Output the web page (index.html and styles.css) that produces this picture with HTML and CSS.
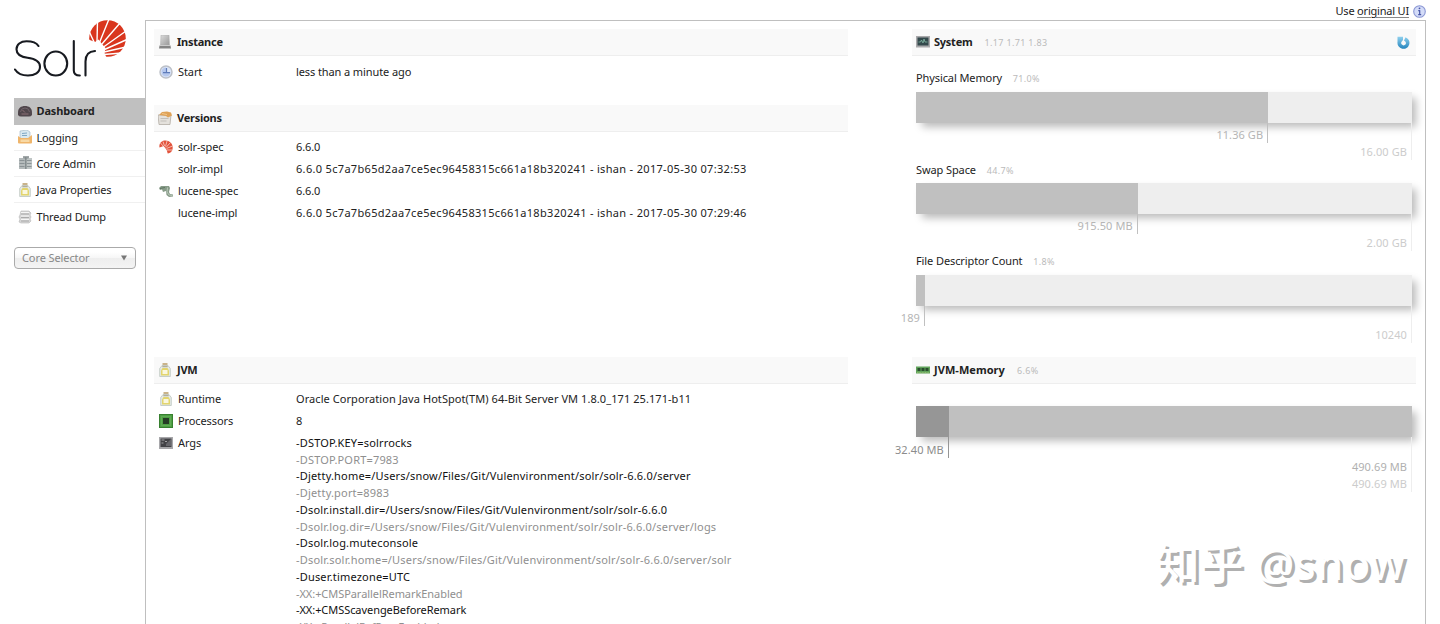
FILE: index.html
```html
<!DOCTYPE html>
<html lang="en">
  <head>
    <meta charset="UTF-8" />
    <title>Solr Admin</title>
    <link rel="stylesheet" href="styles.css">
  </head>
  <body>
    <!-- shared icons -->
    <svg class="defs">
      <linearGradient id="g-metal" x1="0" y1="0" x2="1" y2="1">
        <stop offset="0" stop-color="#ddd" /><stop offset="1" stop-color="#999" />
      </linearGradient>
      <linearGradient id="g-blue" x1="0" y1="0" x2="0" y2="1">
        <stop offset="0" stop-color="#8fd0ee" /><stop offset="1" stop-color="#2384bd" />
      </linearGradient>
      <symbol id="i-jar" viewBox="0 0 14 14">
        <rect x="4.500" y="0" width="5" height="2.500" fill="#c9b38a" />
        <path d="M4 2.500h6l2.300 3V13.500H1.700V5.500z" fill="#e5ebe6" stroke="#b5beb9" stroke-width=".7" />
        <path d="M4.500 5h5l1.500 2.500v5H3v-5z" fill="#e3d56d" />
        <rect x="4.500" y="7" width="5" height="4" fill="#faf7df" />
        <path d="M4.300 3.700h5.400" stroke="#a9a184" />
      </symbol>
      <symbol id="i-solr" viewBox="0 0 14 14">
        <path d="M.5 7.500C-.3 3 3 .5 6.500.5c4 0 7.200 3 7.200 7 0 3-1.500 5.500-5 6l-1-3.500-3-4z" fill="#e2523b" />
        <path d="M4.500 6.500L1.500 3M5.500 6L4 1.500M6.500 6.500L8 1M7 7.500L11.500 2.500M7.500 8.500L13.500 6M8 10l5.500 0" stroke="#fbd5cd" stroke-width=".8" />
      </symbol>
    </svg>

    <div class="wrapper">
      <div class="sidebar">
        <svg class="logo" viewBox="0 0 114 60">
          <circle cx="93.500" cy="18.500" r="18.300" fill="#d9361e" />
          <path d="M72 18.500L81 22L84.500 19.500L88 24L91.500 28L90.500 33L93 39L78 39L70 28z" fill="#fff" />
          <g class="logo-rays">
            <path d="M80.500 23L74 9M83 22L83.500 1M85.500 22.500L95 -1M87.500 24.500L106 3M89.500 27L112 11M90.500 29.500L113 19.500M90 32L112 27M90 34.500L108 33" />
          </g>
          <g class="logo-word">
            <path d="M24.500 26C22 22 17 21.300 12.500 21.300C6.500 21.300 2.500 24.500 2.500 29.200C2.500 35.500 8 37 13.500 37.800C20 38.700 26 40.500 26 46.800C26 52.500 20.500 55.500 14 55.500C7.500 55.500 3.500 53.500 1 49.500" />
            <ellipse cx="41.800" cy="43.500" rx="11.400" ry="12" />
            <path d="M59.800 21v29.500q0 5 6 5" />
            <path d="M71.500 55.500V41.500q0-10 9.500-10.500" />
          </g>
        </svg>

        <ul class="menu">
          <li class="active">
            <svg viewBox="0 0 14 14"><path d="M0 8.500C0 4 3 2 7 2s7 2 7 6.500v2.500q-1 1.500-3 1.500H3q-2 0-3-1.500z" fill="#51474c" /><path d="M2.500 8q.5-4 4.500-4t4.500 4" stroke="#71646a" fill="none" /><path d="M7 8.500L4.500 6M3.500 10h7" stroke="#8d7076" /></svg>
            <span>Dashboard</span>
          </li>
          <li>
            <svg viewBox="0 0 14 14"><path d="M2 1l7-1 3 2v7H2z" fill="#d9e9f1" stroke="#9ab4c2" stroke-width=".6" /><path d="M4 3.500l5-.5M4 5.500h5" stroke="#80a8c4" /><path d="M0 6l3 2h7l4-3v7.500q0 1-1 1H1q-1 0-1-1z" fill="#efb56b" /><path d="M2.500 9.500h9v2.500h-9z" fill="#f8d9a5" /></svg>
            <span>Logging</span>
          </li>
          <li>
            <svg viewBox="0 0 14 14"><path d="M5 0h6v13H5z" fill="#a2a8a9" /><path d="M1 2h6v11H1z" fill="#b4babb" /><path d="M9 2h5v11H9z" fill="#bfc5c5" /><path d="M5.500 2h5M1.500 4.500h5M1.500 7.500h5M1.500 10.500h5M9 4.500h4.500M9 7.500h4.500M9 10.500h4.500" stroke="#7f888b" stroke-width=".8" /><path d="M7.700 1v12" stroke="#7f888b" /></svg>
            <span>Core Admin</span>
          </li>
          <li>
            <svg><use href="#i-jar" /></svg>
            <span>Java Properties</span>
          </li>
          <li>
            <svg viewBox="0 0 14 14"><path d="M3 1h8l2 2-1 2 1 2-1 2 1 2-2 2H3l-2-1 1-3-1-2 1-2z" fill="#d6d6d6" stroke="#b5b5b5" stroke-width=".6" /><path d="M3 4h8M3 7.500h8M3 11h8" stroke="#a5a5a5" stroke-width=".9" /><path d="M3 2.500h8M3 6h8M3 9.500h8" stroke="#f5f5f5" /></svg>
            <span>Thread Dump</span>
          </li>
        </ul>

        <div class="core-selector">
          <span>Core Selector</span>
          <svg viewBox="0 0 6 6"><path d="M0 .5h6L3 5.500z" fill="#777" /></svg>
        </div>
      </div>

      <div class="main">
        <div class="top-link">
          <span>Use <a>original UI</a></span>
          <svg viewBox="0 0 13 13"><circle cx="6.500" cy="6.500" r="5.800" fill="#d4dcf8" stroke="#8b97d4" stroke-width="1.100" /><path d="M6.700 5.300v4.500M5.300 5.600h1.500M5.200 9.700h3" stroke="#4654a5" stroke-width="1.200" /><circle cx="6.500" cy="3.300" r=".9" fill="#4654a5" /></svg>
        </div>

        <div class="content">
          <!-- Instance + versions -->
          <div class="col">
            <div class="block instance">
              <h2>
                <svg viewBox="0 0 14 14"><path d="M3 0h8l.5 10H2.500z" fill="url(#g-metal)" stroke="#aaa" stroke-width=".5" /><path d="M1.500 10.500h11L13 13.500H1z" fill="#858585" /><path d="M2 10.500h10" stroke="#ccc" /></svg>
                <span>Instance</span>
              </h2>
              <dl>
                <dt>
                  <svg viewBox="0 0 14 14"><circle cx="7" cy="7" r="6" fill="#dce6f8" stroke="#bcc0c8" stroke-width="1.500" /><path d="M7 2.500a4.500 4.500 0 1 0 4.500 4.500H7z" fill="#b6c8ed" /><path d="M7.500 3v5M4 7.700h7" stroke="#5f7cba" stroke-width="1.200" /></svg>
                  <span>Start</span>
                </dt>
                <dd>less than a minute ago</dd>
              </dl>
            </div>

            <div class="block versions">
              <h2>
                <svg viewBox="0 0 14 14"><path d="M0 4h13l-1 9.500H1z" fill="#e4e1dc" stroke="#aaa49b" stroke-width=".7" /><path d="M2.500 7.500h8M2.500 10h6" stroke="#c2bfba" /><path d="M1 4l3-3 5-.500 4 1 1 3-4 2-2-1.500z" fill="#dfa257" /><path d="M4 2.500l5 1" stroke="#f3c688" /></svg>
                <span>Versions</span>
              </h2>
              <dl>
                <dt><svg><use href="#i-solr" /></svg><span>solr-spec</span></dt>
                <dd>6.6.0</dd>
                <dt><i></i><span>solr-impl</span></dt>
                <dd class="hash">6.6.0 5c7a7b65d2aa7ce5ec96458315c661a18b320241 - ishan - 2017-05-30 07:32:53</dd>
                <dt>
                  <svg viewBox="0 0 14 14"><path d="M0 4l2-2h8l1 2-1 4 1 2 3 .5v2L10 13l-2.500-2-.5-4-3 1-1-2.500-2 .5z" fill="#879b88" /><path d="M8.500 3.500L8 8l2 3 3.500.5" stroke="#b9c7b8" fill="none" /><path d="M1 4.500l5-1" stroke="#5e7562" /></svg>
                  <span>lucene-spec</span>
                </dt>
                <dd>6.6.0</dd>
                <dt><i></i><span>lucene-impl</span></dt>
                <dd class="hash">6.6.0 5c7a7b65d2aa7ce5ec96458315c661a18b320241 - ishan - 2017-05-30 07:29:46</dd>
              </dl>
            </div>
          </div>

          <!-- System -->
          <div class="col right">
            <h2>
              <svg viewBox="0 0 14 14"><rect y="1" width="14" height="11.500" fill="#a9a9ab" /><rect x="1.500" y="2.500" width="11" height="8" fill="#34494c" /><path d="M2.500 7h2l1-2 1.500 3 1-4 1 3h2.500" stroke="#83b9a4" stroke-width=".8" fill="none" /></svg>
              <span>System</span>
              <small>1.17 1.71 1.83</small>
              <svg class="reload" viewBox="0 0 13 13"><path d="M.5.8l5.500 0v3.200L4.800 5.500a2.300 2.300 0 1 0 3.700.3L7 4.500 8.500 1.200A6 6 0 1 1 .5 6z" fill="url(#g-blue)" /></svg>
            </h2>
            <div class="graph">
              <h3>Physical Memory <small>71.0%</small></h3>
              <div class="bar"><div class="fill" style="width: 71%"></div></div>
              <div class="values">
                <div class="value used" style="width: 71%"><span>11.36 GB</span></div>
                <div class="value max"><span>16.00 GB</span></div>
              </div>
            </div>
            <div class="graph">
              <h3>Swap Space <small>44.7%</small></h3>
              <div class="bar"><div class="fill" style="width: 44.7%"></div></div>
              <div class="values">
                <div class="value used" style="width: 44.7%"><span>915.50 MB</span></div>
                <div class="value max"><span>2.00 GB</span></div>
              </div>
            </div>
            <div class="graph">
              <h3>File Descriptor Count <small>1.8%</small></h3>
              <div class="bar"><div class="fill" style="width: 1.8%"></div></div>
              <div class="values">
                <div class="value used" style="width: 1.8%"><span>189</span></div>
                <div class="value max"><span>10240</span></div>
              </div>
            </div>
          </div>

          <!-- JVM -->
          <div class="col">
            <h2><svg><use href="#i-jar" /></svg><span>JVM</span></h2>
            <dl>
              <dt><svg><use href="#i-jar" /></svg><span>Runtime</span></dt>
              <dd class="runtime">Oracle Corporation Java HotSpot(TM) 64-Bit Server VM 1.8.0_171 25.171-b11</dd>
              <dt>
                <svg viewBox="0 0 14 14"><rect x=".5" y=".5" width="13" height="13" fill="#4d9f43" stroke="#37802f" /><rect x="4" y="4" width="6" height="6" fill="#263c25" /><path d="M2.500 2.500h9v9h-9z" fill="none" stroke="#80bb70" stroke-width=".8" stroke-dasharray="1 1" /></svg>
                <span>Processors</span>
              </dt>
              <dd>8</dd>
              <dt>
                <svg viewBox="0 0 14 14"><rect y="1" width="14" height="12" fill="#a7a7aa" /><rect x="1.500" y="2.500" width="11" height="8.500" fill="#424246" /><path d="M2.500 4h3M6 5.500h2M2.500 7h2" stroke="#bbb" stroke-width=".8" /><path d="M7 8l5-5v7H7z" fill="#66666b" /></svg>
                <span>Args</span>
              </dt>
              <dd>
                <ul class="args">
                  <li>-DSTOP.KEY=solrrocks</li>
                  <li>-DSTOP.PORT=7983</li>
                  <li>-Djetty.home=/Users/snow/Files/Git/Vulenvironment/solr/solr-6.6.0/server</li>
                  <li>-Djetty.port=8983</li>
                  <li>-Dsolr.install.dir=/Users/snow/Files/Git/Vulenvironment/solr/solr-6.6.0</li>
                  <li>-Dsolr.log.dir=/Users/snow/Files/Git/Vulenvironment/solr/solr-6.6.0/server/logs</li>
                  <li>-Dsolr.log.muteconsole</li>
                  <li>-Dsolr.solr.home=/Users/snow/Files/Git/Vulenvironment/solr/solr-6.6.0/server/solr</li>
                  <li>-Duser.timezone=UTC</li>
                  <li class="flags">-XX:+CMSParallelRemarkEnabled</li>
                  <li class="flags">-XX:+CMSScavengeBeforeRemark</li>
                  <li class="flags">-XX:+ParallelRefProcEnabled</li>
                </ul>
              </dd>
            </dl>
          </div>

          <!-- JVM-Memory -->
          <div class="col right">
            <h2>
              <svg viewBox="0 0 14 14"><rect y="3.500" width="14" height="7" fill="#60a35a" /><path d="M1.500 5h3v3h-3zM5.500 5h3v3h-3zM9.500 5h3v3h-3z" fill="#294d2d" /><path d="M1 9.700h12" stroke="#a8c77b" stroke-width=".8" stroke-dasharray="1 .6" /></svg>
              <span class="wide">JVM-Memory</span>
              <small>6.6%</small>
            </h2>
            <div class="graph jvm">
              <div class="bar"><div class="fill" style="width: 6.6%"></div></div>
              <div class="values">
                <div class="value used" style="width: 6.6%"><span>32.40 MB</span></div>
                <div class="value total"><span>490.69 MB</span></div>
                <div class="value max"><span>490.69 MB</span></div>
              </div>
            </div>
          </div>
        </div>
      </div>
    </div>

    <div class="watermark">知乎 @snow</div>
  </body>
</html>
```
FILE: styles.css
```css
* {
  box-sizing: border-box;
}
body {
  margin: 0;
  height: 624px;
  overflow: hidden;
  background: #fff;
  color: #222;
  font-family: "Noto Sans", "Open Sans", sans-serif;
  font-size: 11px;
  line-height: 16px;
  letter-spacing: -0.1px;
  white-space: nowrap;
}
ul,
dl,
dd,
h2,
h3 {
  margin: 0;
  padding: 0;
  list-style: none;
}
svg {
  width: 14px;
  height: 14px;
  flex: none;
  fill: none;
}
.defs {
  position: absolute;
  width: 0;
  height: 0;
}
.wrapper {
  display: flex;
  padding: 0 14px;
}

/* sidebar */
.sidebar {
  width: 131px;
  padding-top: 20px;
}
.logo {
  display: block;
  width: 114px;
  height: 60px;
  overflow: visible;
}
.logo-word {
  fill: none;
  stroke: #171a20;
  stroke-width: 2.1;
  stroke-linecap: round;
}
.logo-rays {
  stroke: #fff;
  stroke-width: 1.4;
}
.menu {
  margin-top: 18px;
}
.menu li {
  display: flex;
  align-items: center;
  gap: 4.5px;
  height: 26.3px;
  padding-left: 4px;
  border-bottom: 1px solid #f0f0f0;
  letter-spacing: -0.15px;
}
.menu li span {
  padding-top: 1px;
}
.menu li.active {
  height: 26.5px;
  background: #c0c0c0;
  font-weight: bold;
  border-bottom: 0;
}
.menu li.active span {
  padding-top: 0;
}
.menu li:last-child {
  border-bottom: 0;
}
.core-selector {
  display: flex;
  align-items: center;
  justify-content: space-between;
  width: 122px;
  height: 22px;
  margin-top: 17px;
  padding: 0 8px 0 7px;
  border: 1px solid #aaa;
  border-radius: 4px;
  background: linear-gradient(#fff 20%, #f6f6f6 50%, #eee 52%, #f4f4f4);
  color: #888;
}
.core-selector svg {
  width: 6px;
  height: 6px;
}

/* main */
.main {
  width: 1281px;
}
.top-link {
  display: flex;
  justify-content: flex-end;
  align-items: center;
  gap: 4px;
  height: 20px;
  padding-top: 2px;
  letter-spacing: -0.2px;
}
.top-link a {
  text-decoration: underline #888;
  text-underline-offset: 2px;
}
.top-link svg {
  width: 13px;
  height: 13px;
}
.content {
  display: grid;
  grid-template-columns: 694px 504px;
  grid-template-rows: 328px auto;
  column-gap: 64px;
  padding: 8px 9px 0 8px;
  border: 1px solid #bfbfbf;
  border-bottom: 0;
}
.instance {
  height: 76.4px;
}
h2 {
  display: flex;
  align-items: center;
  gap: 5px;
  height: 27px;
  padding-left: 4px;
  background: #f9f9f9;
  border-bottom: 1px solid #eee;
  font-size: 11px;
  letter-spacing: -0.25px;
}
.right h2 {
  gap: 4px;
}
h2 .wide {
  letter-spacing: 0.05px;
}
h2 small {
  margin-left: 8px;
  padding-top: 1px;
}
small {
  font-size: 9px;
  font-weight: normal;
  letter-spacing: 0.35px;
  color: #bbb;
}
.reload {
  width: 13px;
  height: 13px;
  margin-left: auto;
  margin-right: 6px;
}
dl {
  display: grid;
  grid-template-columns: 137px auto;
  grid-auto-rows: minmax(22px, auto);
  padding: 4px 0 0 5px;
  line-height: 22px;
}
.instance dl {
  padding-top: 5px;
}
.versions dl {
  padding-top: 4px;
}
dt {
  display: flex;
  align-items: center;
  gap: 5px;
  height: 22px;
}
dt i {
  width: 14px;
}
.hash {
  letter-spacing: 0.32px;
}
.runtime {
  letter-spacing: 0.07px;
}
.args {
  padding-top: 3px;
  line-height: 16.74px;
  letter-spacing: 0.18px;
  color: #111;
}
.args li:nth-child(even) {
  color: #8f8f8f;
}
.args .flags {
  letter-spacing: -0.06px;
}

/* graphs */
.graph {
  height: 91.5px;
  padding: 0 4px;
}
.right h2 + .graph {
  margin-top: 14px;
}
h3 {
  height: 21.7px;
  font-size: 11px;
  font-weight: normal;
}
h3 small {
  margin-left: 8px;
}
.bar {
  height: 31px;
  background: #eee;
  box-shadow: 5px 5px 8px -1px #bbb;
}
.fill {
  height: 31px;
  background: #c0c0c0;
}
.values {
  display: grid;
  letter-spacing: 0.08px;
}
.value {
  display: flex;
  grid-area: 1 / 1;
  align-items: flex-end;
  justify-content: flex-end;
  padding-right: 4px;
  border-right: 1px solid #eee;
}
.value.used {
  height: 20px;
  border-color: #c0c0c0;
  color: #b5b5b5;
}
.value.max {
  height: 37px;
  color: #ccc;
}
.right .graph.jvm {
  margin-top: 22px;
}
.jvm .bar {
  background: #c0c0c0;
}
.jvm .fill {
  background: #969696;
}
.jvm .value.used {
  height: 21px;
  border-color: #969696;
  color: #8c8c8c;
}
.jvm .value.total {
  height: 38px;
  border-color: #c0c0c0;
  color: #b0b0b0;
}
.jvm .value.max {
  height: 55px;
}

.watermark {
  position: absolute;
  left: 1156px;
  top: 534px;
  font: 500 43.5px/58px "Noto Sans", "Noto Sans CJK SC", sans-serif;
  letter-spacing: 0.3px;
  color: #fff;
  text-shadow: 3px 3px 0 #b0b0b0;
}
```
